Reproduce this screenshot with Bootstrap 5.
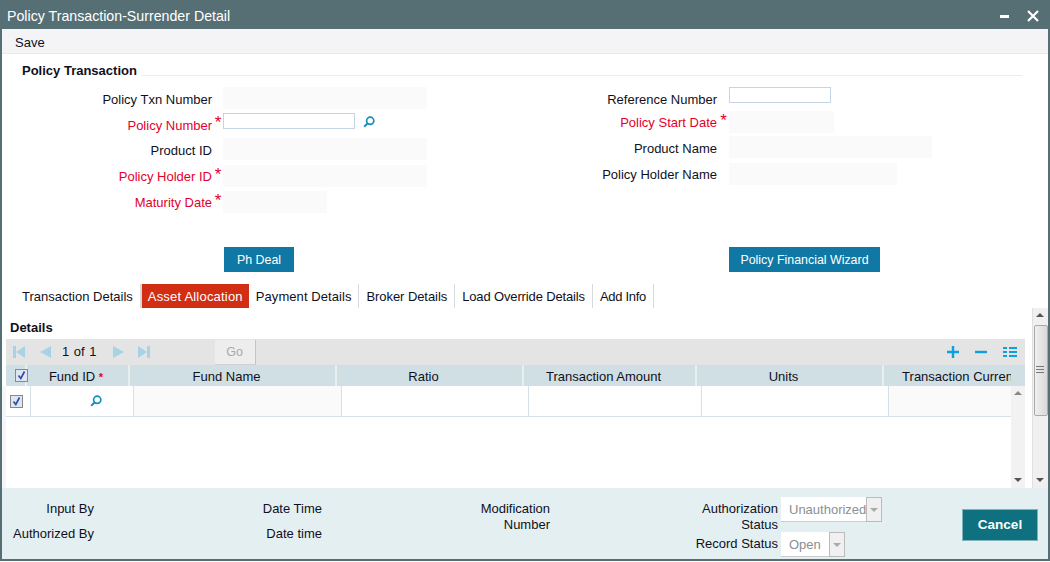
<!DOCTYPE html>
<html lang="en"><head><meta charset="utf-8"><title>Policy Transaction-Surrender Detail</title>
<link rel="stylesheet" href="https://cdn.jsdelivr.net/npm/bootstrap@5.3.0/dist/css/bootstrap.min.css">
<style>
html,body{margin:0;background:#fff}
body{font:13px/16px "Liberation Sans",Arial,sans-serif;color:#10101c}
.win{width:1050px;height:561px;border:2px solid #566f75;border-top:1px solid #566f75;overflow:hidden}
.ttl{height:28px;background:#566f75;color:#fff;font-size:14.2px;padding:1px 5px 0}
.ttl svg{display:block}
.mnu{height:25px;background:#f4f4f6;border-bottom:1px solid #e6e8ea;padding:3px 0 0 13px}
.body-top{height:254px;padding-left:20px}
.sec{height:33px;padding-top:9px;padding-right:26px}
.sec b{font-size:13px;line-height:16px}
.sec i{height:1px;background:#eaecee;margin:12px 0 0 5px}
.frm{height:131px}
.col-l{width:405px}
.rw{height:26px}
.rw.h25{height:25px}.rw.h27{height:27px}.rw.h24{height:24px}
.lab{width:190px;text-align:right;line-height:24px}
.col-l .rw:first-child .lab{padding-top:1px}
.rw.h25 .lab,.rw.h27 .lab{padding-top:1px}
.rl .lab{width:290px;line-height:22px;padding-top:1px!important}
.rl .rw.h24 .lab{line-height:24px}
.rl .rw.h27 .lab{padding-top:2px!important}
.req{color:#e3002b}
.st{width:10px;color:#e3002b;font-size:17px;line-height:20px;text-align:center;margin-left:1px}
.rl .st{width:11px}
.fld{background:#fafafa;height:22px;border:0;border-radius:0;padding:0;box-shadow:none;min-height:0;margin:0}
.w204{width:204px}.w104{width:104px}.w105{width:105px}.w203{width:203px}.w168{width:168px}
.fld.open{background:#fff;height:16px;border:1px solid #c5d5e6}
.w132{width:132px}.w102{width:102px}
.lens{margin:3px 0 0 8px}
.btnrow{height:26px;margin-top:29px}
.bt{background:#1078a5;color:#fff;border:0;border-radius:0;height:25px;padding:1px 0 0;font-size:12.4px;line-height:24px}
.bt:hover{background:#1078a5;color:#fff}
.w70{width:70px;margin-left:202px}.w151{width:151px;margin-left:435px}
.tabs{height:24px;margin-top:11px}
.tabs .nav-link{color:#10101c;padding:1px 7px 0;height:24px;line-height:23px;border-right:1px solid #d5dadd;font-size:13px}
.tabs .nav-item:first-child .nav-link{padding-left:0;padding-right:7px}
.tabs .nav-link.on{background:#d12e14;color:#fff;border-right:0;padding:1px 6px 0;margin-left:1px;box-shadow:-1px 0 0 #d5dadd;letter-spacing:.2px}
.ls1{letter-spacing:.07px}.ls4{letter-spacing:-.07px}.ls2{letter-spacing:-.14px}.ls3{letter-spacing:-.3px}
.low{height:180px}
.det{width:1031px;padding:0 0 0 4px}
.hd{height:31px;padding:12px 0 0 4px;font-size:13px;font-weight:700;line-height:16px}
.tb{height:26px;background:#e4e4e4;width:1019px}
.tb .pg{padding:0 0 0 7px}
.gp15{margin-left:15px}.gp10{margin-left:10px}.gp14{margin-left:14px}
.wsp{word-spacing:1px}
.go,.go:disabled{width:41px;height:25px;margin:1px 0 0 65px;background:#ededed;border:0;border-right:1px solid #c4c4c4;border-bottom:1px solid #d0d0d0;border-radius:0;color:#aaa;font-size:12.5px;padding:0;line-height:25px;opacity:1}
.tools{margin-left:auto;padding-right:8px}
.gh{height:21px;background:#cfdfe3;width:1019px}
.ghi{width:1005px;overflow:hidden;white-space:nowrap;height:100%}
.ghi>div,.gb>div{flex:none;text-align:center;height:100%}
.ghi>div{border-right:2px solid #e8eff1;line-height:23px}
.ghi>.shift{padding-right:12px}
.gb{height:31px;border-bottom:1px solid #d5e0e9;width:1005px;overflow:hidden}
.gb>div{border-right:1px solid #d5e0e9}
.c0{width:21px;padding-left:9px}.c1{width:103px;padding-right:3px}.c2{width:207px}.c3{width:187px}.c4{width:173px}.c5{width:187px}.c6{width:160px;border-right:0!important}
.d0{width:25px;padding-left:4px}.d1{width:103px}.d2{width:208px}.d3{width:187px}.d4{width:173px}.d5{width:187px}.d6{width:122px;border-right:0!important}
.rlens{margin-right:7px}
.fstar{font-size:11px}
.shade{background:#fafafa}
.gridwrap{height:122px;box-shadow:-4px 0 0 #f6f6f6}
.vs{width:14px;height:102px;background:#f2f2f2;position:relative}
.sb1{height:180px;width:16px;background:#f0f0f0;position:relative;border-left:1px solid #e0e0e0}
.thumb{position:absolute;left:1px;right:0;height:91px;top:17px;background:linear-gradient(90deg,#f0f0f0,#d8d8d8);border:1px solid #aaa;border-radius:2px}
.up,.dn{position:absolute;left:3px;width:0;height:0;border:4px solid transparent}
.up{top:5px;border-bottom-color:#888;border-top:0}
.dn{bottom:6px;border-top-color:#555;border-bottom:0}
.sb1 .up{border-bottom-color:#555}
.grip{position:absolute;left:3px;top:58px;width:8px;height:7px;border-top:1px solid #777;border-bottom:1px solid #777}
.grip:after{content:"";display:block;height:1px;background:#777;margin-top:2px}
.ft{height:71px;background:#e4eff2;display:grid;grid-template-columns:92px 228px 228px 228px 1fr;position:relative}
.ft .cl{text-align:right;padding-top:13px}
.mt9{margin-top:9px}
.mt3{margin-top:3px}
.sel{height:25px;background:#fff;color:#8a8f94;line-height:25px;padding-left:8px;border-bottom:1px solid #ccc}
.arw{width:16px;height:25px;background:#f0f0f0;border:1px solid #bbb;position:relative}
.arw:after{content:"";position:absolute;left:3px;top:10px;border:4px solid transparent;border-top-color:#aaa;border-bottom:0}
.s85{width:85px}.s49{width:48px}
.selc{padding:9px 0 0 3px}
.gap10{margin-top:10px}
.cnc{position:absolute;right:10px;top:21px;width:76px;height:32px;background:#0f7080;color:#fff;border:1px solid #7fb4bd;border-radius:0;font-weight:700;font-size:13.5px;padding:0}
.cnc:hover{background:#0f7080;color:#fff}
</style></head><body>
<div class="win d-flex flex-column">
 <div class="ttl d-flex align-items-center justify-content-between flex-shrink-0"><span>Policy Transaction-Surrender Detail</span>
  <span class="d-flex align-items-center gap-3 pe-1">
   <svg width="12" height="12" viewBox="0 0 12 12"><rect x="1" y="5" width="9" height="3" fill="#fff"/></svg>
   <svg width="12" height="12" viewBox="0 0 12 12"><path d="M1 1l10 10M11 1L1 11" stroke="#fff" stroke-width="2.2"/></svg>
  </span></div>
 <div class="mnu d-flex align-items-center flex-shrink-0">Save</div>
 <div class="body-top flex-shrink-0">
  <div class="sec d-flex"><b>Policy Transaction</b><i class="flex-grow-1"></i></div>
  <div class="frm d-flex">
   <div class="col-l">
    <div class="rw d-flex"><div class="lab">Policy Txn Number</div><div class="st"></div><input class="form-control fld w204" readonly></div>
    <div class="rw h25 d-flex"><div class="lab req">Policy Number</div><div class="st">*</div><input class="form-control fld open w132">
     <svg class="lens" width="12" height="12" viewBox="0 0 12 12"><circle cx="7.2" cy="4.8" r="3.6" fill="none" stroke="#0f8fc4" stroke-width="1.7"/><path d="M4.6 7.4L1.2 10.8" stroke="#0f8fc4" stroke-width="2"/></svg></div>
    <div class="rw h27 d-flex"><div class="lab">Product ID</div><div class="st"></div><input class="form-control fld w204" readonly></div>
    <div class="rw d-flex"><div class="lab req">Policy Holder ID</div><div class="st">*</div><input class="form-control fld w204" readonly></div>
    <div class="rw d-flex"><div class="lab req">Maturity Date</div><div class="st">*</div><input class="form-control fld w104" readonly></div>
   </div>
   <div class="rl d-flex flex-column">
    <div class="rw h24 d-flex"><div class="lab">Reference Number</div><div class="st"></div><input class="form-control fld open w102"></div>
    <div class="rw h25 d-flex"><div class="lab req">Policy Start Date</div><div class="st">*</div><input class="form-control fld w105" readonly></div>
    <div class="rw h27 d-flex"><div class="lab">Product Name</div><div class="st"></div><input class="form-control fld w203" readonly></div>
    <div class="rw d-flex"><div class="lab">Policy Holder Name</div><div class="st"></div><input class="form-control fld w168" readonly></div>
   </div>
  </div>
  <div class="btnrow d-flex"><button class="btn bt w70">Ph Deal</button><button class="btn bt w151">Policy Financial Wizard</button></div>
  <ul class="nav tabs">
   <li class="nav-item"><a class="nav-link" href="#">Transaction Details</a></li>
   <li class="nav-item"><a class="nav-link on" href="#">Asset Allocation</a></li>
   <li class="nav-item"><a class="nav-link ls1" href="#">Payment Details</a></li>
   <li class="nav-item"><a class="nav-link ls4" href="#">Broker Details</a></li>
   <li class="nav-item"><a class="nav-link ls2" href="#">Load Override Details</a></li>
   <li class="nav-item"><a class="nav-link ls3" href="#">Add Info</a></li>
  </ul>
 </div>
 <div class="low d-flex flex-shrink-0 overflow-hidden">
  <div class="det">
   <div class="hd">Details</div>
   <div class="tb d-flex align-items-center">
    <div class="pg d-flex align-items-center">
     <svg width="12" height="12" viewBox="0 0 12 12"><rect x="0" y="0" width="3" height="12" fill="#a8d3e6"/><path d="M12 0v12L3 6z" fill="#a8d3e6"/></svg>
     <svg class="gp15" width="12" height="12" viewBox="0 0 12 12"><path d="M11 0v12L0 6z" fill="#a8d3e6"/></svg>
     <span class="gp10 wsp">1&nbsp;of&nbsp;1</span>
     <svg class="gp15" width="12" height="12" viewBox="0 0 12 12"><path d="M1 0v12L12 6z" fill="#a8d3e6"/></svg>
     <svg class="gp14" width="12" height="12" viewBox="0 0 12 12"><path d="M0 0v12L9 6z" fill="#a8d3e6"/><rect x="9" y="0" width="3" height="12" fill="#a8d3e6"/></svg>
     <button class="btn go" disabled>Go</button>
    </div>
    <div class="tools d-flex align-items-center gap-3">
     <svg width="12" height="12" viewBox="0 0 12 12"><path d="M6 0v12M0 6h12" stroke="#0f9fdf" stroke-width="2.4"/></svg>
     <svg width="12" height="12" viewBox="0 0 12 12"><path d="M0 6h12" stroke="#0f9fdf" stroke-width="2.4"/></svg>
     <svg width="14" height="12" viewBox="0 0 14 12"><path d="M0 2h4M6 2h8M0 6h4M6 6h8M0 10h4M6 10h8" stroke="#0f9fdf" stroke-width="2.2"/></svg>
    </div>
   </div>
   <div class="gh"><div class="ghi d-flex">
    <div class="c0 d-flex align-items-center justify-content-start"><svg class="flex-shrink-0" width="13" height="13" viewBox="0 0 13 13"><rect x=".5" y=".5" width="12" height="12" fill="#dfe6f0" stroke="#888"/><path d="M3.5 6.5l2.3 3 3.7-7" fill="none" stroke="#2f4cb0" stroke-width="1.7"/></svg></div>
    <div class="c1">Fund ID <span class="req fw-bold fstar">*</span></div>
    <div class="c2 shift">Fund Name</div><div class="c3 shift">Ratio</div><div class="c4 shift">Transaction Amount</div><div class="c5 shift">Units</div><div class="c6">Transaction Currency</div>
   </div></div>
   <div class="d-flex gridwrap">
    <div>
     <div class="gb d-flex">
      <div class="d0 d-flex align-items-center justify-content-start"><svg class="flex-shrink-0" width="13" height="13" viewBox="0 0 13 13"><rect x=".5" y=".5" width="12" height="12" fill="#dfe6f0" stroke="#888"/><path d="M3.5 6.5l2.3 3 3.7-7" fill="none" stroke="#2f4cb0" stroke-width="1.7"/></svg></div>
      <div class="d1 d-flex align-items-center justify-content-end pe-4"><svg class="rlens" width="12" height="12" viewBox="0 0 12 12"><circle cx="7.2" cy="4.8" r="3.6" fill="none" stroke="#0f8fc4" stroke-width="1.7"/><path d="M4.6 7.4L1.2 10.8" stroke="#0f8fc4" stroke-width="2"/></svg></div>
      <div class="d2 shade"></div><div class="d3"></div><div class="d4"></div><div class="d5"></div><div class="d6 shade"></div>
     </div>
    </div>
    <div class="vs flex-shrink-0"><span class="up"></span><span class="dn"></span></div>
   </div>
  </div>
  <div class="sb1 flex-shrink-0"><span class="up"></span><span class="thumb"></span><span class="grip"></span><span class="dn"></span></div>
 </div>
 <div class="ft flex-shrink-0">
  <div class="cl"><div>Input By</div><div class="mt9">Authorized By</div></div>
  <div class="cl"><div>Date Time</div><div class="mt9">Date time</div></div>
  <div class="cl">Modification<br>Number</div>
  <div class="cl">Authorization<br>Status<div class="mt3">Record Status</div></div>
  <div class="selc">
   <div class="d-flex"><div class="sel s85">Unauthorized</div><div class="arw"></div></div>
   <div class="d-flex gap10"><div class="sel s49">Open</div><div class="arw"></div></div>
  </div>
  <button class="btn cnc">Cancel</button>
 </div>
</div>
</body></html>
